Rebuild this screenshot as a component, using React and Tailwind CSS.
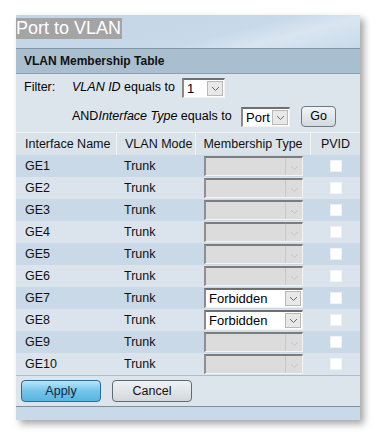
import React from "react";

const font = { fontFamily: '"Liberation Sans", Arial, sans-serif' };

function Chevron({ color = "#8a8a8a" }) {
  return (
    <svg width="9" height="6" viewBox="0 0 9 6">
      <path d="M1 1 L4.5 4.5 L8 1" fill="none" stroke={color} strokeWidth="1" />
    </svg>
  );
}

function DisabledSelect() {
  return (
    <div className="flex h-[20px] w-[99px] border-t-2 border-l-2 border-t-[#7d7d7d] border-l-[#8f8f8f] border-r border-b border-r-[#f4f4f4] border-b-[#f4f4f4] bg-[#dcdcdc]">
      <div className="flex-1" />
      <div className="flex w-[17px] items-center justify-center border-l border-[#c9c9c9] pt-[2px]">
        <Chevron color="#c4c4c4" />
      </div>
    </div>
  );
}

function ValueSelect({ value, w }) {
  return (
    <div className={`flex h-[20px] ${w} border-t-2 border-l-2 border-t-[#6f6f6f] border-l-[#8a8a8a] border-r border-b border-r-[#f2f2f2] border-b-[#f2f2f2] bg-white`}>
      <div className="flex flex-1 items-center pl-[3px] text-[13px] leading-none text-black">{value}</div>
      <div className="my-[1px] mr-[1px] flex w-[16px] items-center justify-center border border-[#b9b9b9] bg-[#e8e8e8] pt-[1px]">
        <Chevron color="#6a6a6a" />
      </div>
    </div>
  );
}

const rows = [
  { n: "GE1" },
  { n: "GE2" },
  { n: "GE3" },
  { n: "GE4" },
  { n: "GE5" },
  { n: "GE6" },
  { n: "GE7", v: "Forbidden" },
  { n: "GE8", v: "Forbidden" },
  { n: "GE9" },
  { n: "GE10" },
];

export default function App() {
  return (
    <div className="h-[434px] w-[376px] bg-white pl-[16px] pt-[15px]" style={font}>
      <div className="w-[344px] bg-[#dde5ec] shadow-[4px_4px_7px_rgba(0,0,0,0.35)]">
        {/* Title */}
        <div className="h-[33px] bg-[linear-gradient(165deg,#c3d5e6_0%,#c8d9e9_60%,#d9e6f1_75%,#c9dae9_100%)] pt-[2px]">
          <span className="inline-block h-[21px] bg-[#a4a4a4] pr-[1px] text-[18px] leading-[21px] text-white">
            Port to VLAN
          </span>
        </div>
        {/* Section header */}
        <div className="flex h-[26px] items-center border-t border-b border-t-[#7f97a9] border-b-[#8aa0b0] bg-[#a9bfcf] pl-[8px] text-[12px] font-bold text-[#111]">
          VLAN Membership Table
        </div>
        {/* Filter row 1 */}
        <div className="flex h-[27px] items-center text-[12.5px] text-black">
          <span className="w-[56px] pl-[8px]">Filter:</span>
          <span className="w-[110px]">
            <i>VLAN ID</i> equals to
          </span>
          <ValueSelect value="1" w="w-[43px]" />
        </div>
        {/* Filter row 2 */}
        <div className="flex h-[31px] items-center text-[12.5px] text-black">
          <span className="w-[225px] whitespace-pre pl-[56px]">
            AND<i>Interface Type</i> equals to
          </span>
          <ValueSelect value="Port" w="w-[49px]" />
          <div className="ml-[11px] flex h-[21px] w-[35px] items-center justify-center rounded-[4px] border border-[#6d7a84] bg-[linear-gradient(#f2f4f6,#d4d9de)] text-[12.5px]">
            Go
          </div>
        </div>
        {/* Table header */}
        <div className="flex h-[23px] items-center border-t border-[#f0f4f7] bg-[#dbe3ea] text-[12.5px] text-[#111]">
          <div className="flex h-full w-[101px] items-center border-r border-[#f0f4f7] pl-[9px]">Interface Name</div>
          <div className="flex h-full w-[79px] items-center border-r border-[#f0f4f7] pl-[8px]">VLAN Mode</div>
          <div className="flex h-full w-[115px] items-center justify-center border-r border-[#f0f4f7]">Membership Type</div>
          <div className="flex h-full flex-1 items-center justify-center">PVID</div>
        </div>
        {/* Rows */}
        {rows.map((r, i) => (
          <div
            key={r.n}
            className={`flex h-[22px] items-center text-[12.5px] text-[#111] ${i % 2 === 0 ? "bg-[#c9d9e8]" : "bg-[#dbe4ec]"}`}
          >
            <div className="w-[101px] pl-[9px]">{r.n}</div>
            <div className="w-[87px] pl-[7px]">Trunk</div>
            <div className="w-[107px]">
              {r.v ? <ValueSelect value={r.v} w="w-[99px]" /> : <DisabledSelect />}
            </div>
            <div className="flex flex-1 justify-center">
              <div className="h-[12px] w-[12px] border border-[#f2f2f2] bg-white" />
            </div>
          </div>
        ))}
        {/* Buttons */}
        <div className="flex h-[31px] items-center gap-[11px] border-t border-[#aebccb] pl-[5px]">
          <div className="flex h-[22px] w-[80px] items-center justify-center rounded-[4px] border border-[#2f6a8c] bg-[linear-gradient(#b9e6fa,#74c4ea_50%,#5ab4e2)] text-[12.5px] text-[#0b2a3d]">
            Apply
          </div>
          <div className="flex h-[22px] w-[80px] items-center justify-center rounded-[4px] border border-[#5f6a72] bg-[linear-gradient(#f0f2f4,#d3d8dc)] text-[12.5px] text-[#111]">
            Cancel
          </div>
        </div>
        {/* Footer */}
        <div className="h-[14px] border-t border-[#7f8f9c] bg-[#c8d9ea]" />
      </div>
    </div>
  );
}
